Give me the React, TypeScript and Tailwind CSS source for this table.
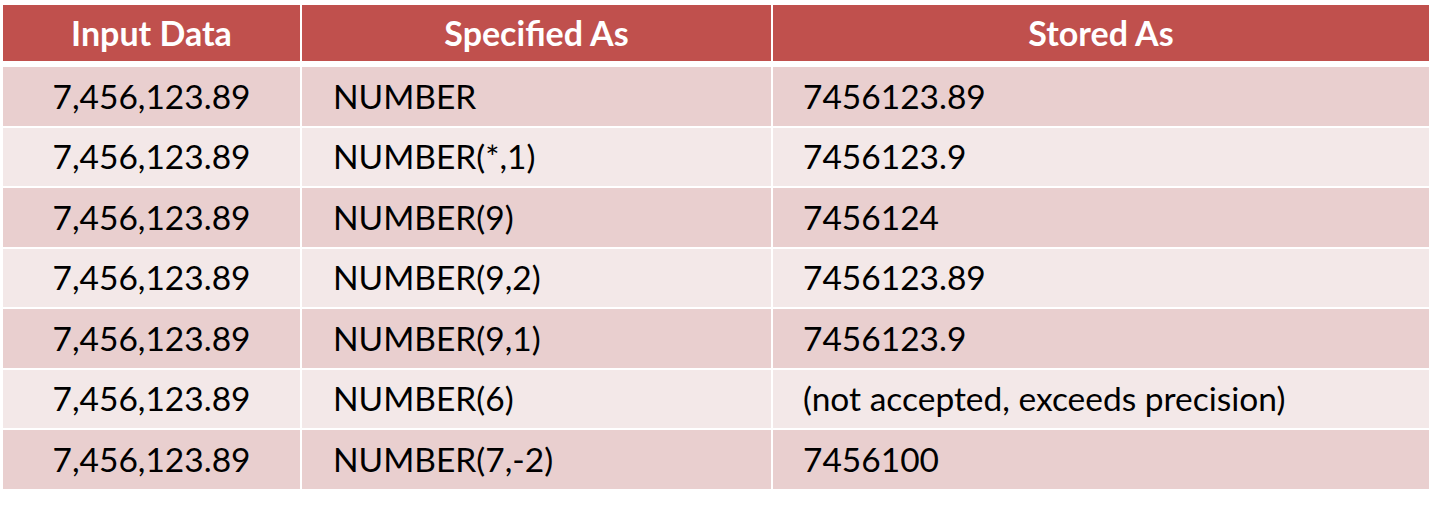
const rows = [
  ['7,456,123.89', 'NUMBER', '7456123.89'],
  ['7,456,123.89', 'NUMBER(*,1)', '7456123.9'],
  ['7,456,123.89', 'NUMBER(9)', '7456124'],
  ['7,456,123.89', 'NUMBER(9,2)', '7456123.89'],
  ['7,456,123.89', 'NUMBER(9,1)', '7456123.9'],
  ['7,456,123.89', 'NUMBER(6)', '(not accepted, exceeds precision)'],
  ['7,456,123.89', 'NUMBER(7,-2)', '7456100'],
]

export default function App() {
  return (
    <div className="w-[1433px] h-[506px] bg-white pl-[3px] pt-[5px] font-['Lato',sans-serif] text-black">
      <div className="w-[1426px] flex flex-col">
        {/* header */}
        <div className="grid grid-cols-[297px_469px_656px] gap-x-[2px] h-[56px] text-white font-bold text-[34px] leading-none">
          <div className="bg-[#c0504d] flex items-center justify-center">Input Data</div>
          <div className="bg-[#c0504d] flex items-center justify-center">Specified As</div>
          <div className="bg-[#c0504d] flex items-center justify-center">Stored As</div>
        </div>
        <div className="mt-[6px] flex flex-col gap-[2px]">
          {rows.map((r, i) => (
            <div
              key={i}
              className="grid grid-cols-[297px_469px_656px] gap-x-[2px] h-[58.5px] text-[33.5px] leading-none"
            >
              <div className={`${i % 2 === 0 ? 'bg-[#e9cfcf]' : 'bg-[#f3e8e8]'} flex items-center justify-center`}>
                {r[0]}
              </div>
              <div className={`${i % 2 === 0 ? 'bg-[#e9cfcf]' : 'bg-[#f3e8e8]'} flex items-center pl-[31px]`}>
                {r[1]}
              </div>
              <div className={`${i % 2 === 0 ? 'bg-[#e9cfcf]' : 'bg-[#f3e8e8]'} flex items-center pl-[30px]`}>
                {r[2]}
              </div>
            </div>
          ))}
        </div>
      </div>
    </div>
  )
}
